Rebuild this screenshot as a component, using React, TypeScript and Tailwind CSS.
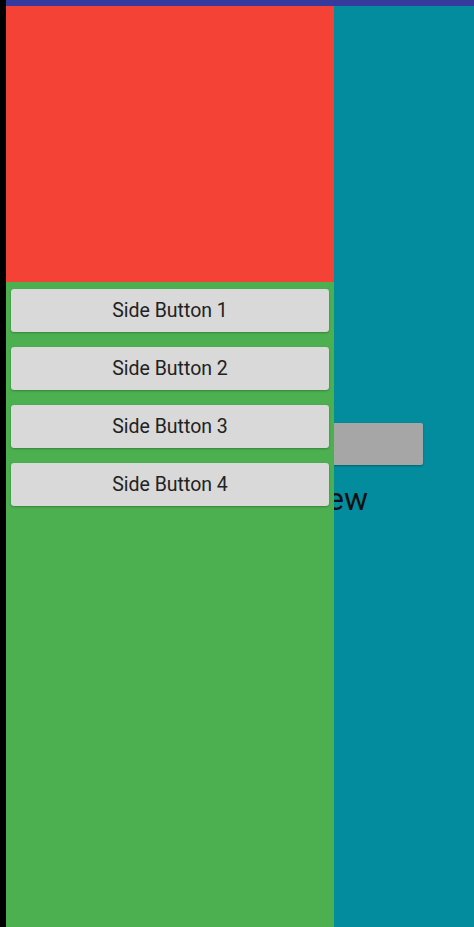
import React from "react";

const sideButtons = ["Side Button 1", "Side Button 2", "Side Button 3", "Side Button 4"];

export default function App() {
  return (
    <div
      className="flex h-[927px] w-[474px] overflow-hidden bg-black"
      style={{ fontFamily: "Roboto, 'Noto Sans', sans-serif" }}
    >
      <div className="w-[6px] shrink-0 bg-black" />
      <div className="flex flex-1 flex-col">
        <div className="h-[6px] bg-[#353a9c]" />
        <div className="relative flex-1 bg-[#028c9e]">
          {/* main content */}
          <div className="flex flex-col pt-[417px]">
            <button className="ml-[45px] mr-[51px] h-[42px] rounded-[2px] bg-[#a6a6a6] shadow-[0_1px_2px_rgba(0,0,0,0.3)]" />
            <p className="mt-[14px] pr-[106px] text-right text-[32px] leading-[40px] text-[#111]">
              Main View
            </p>
          </div>

          {/* drawer over the main content */}
          <div className="absolute left-0 top-0 flex h-full w-[328px] flex-col">
            <div className="h-[276px] bg-[#f44336]" />
            <div className="flex flex-1 flex-col gap-[15px] bg-[#4caf50] px-[5px] pt-[7px]">
              {sideButtons.map((label) => (
                <button
                  key={label}
                  className="h-[43px] rounded-[3px] bg-[#d9d9d9] text-[19.5px] text-[#222] shadow-[0_1px_2px_rgba(0,0,0,0.25)]"
                >
                  {label}
                </button>
              ))}
            </div>
          </div>
        </div>
      </div>
    </div>
  );
}
